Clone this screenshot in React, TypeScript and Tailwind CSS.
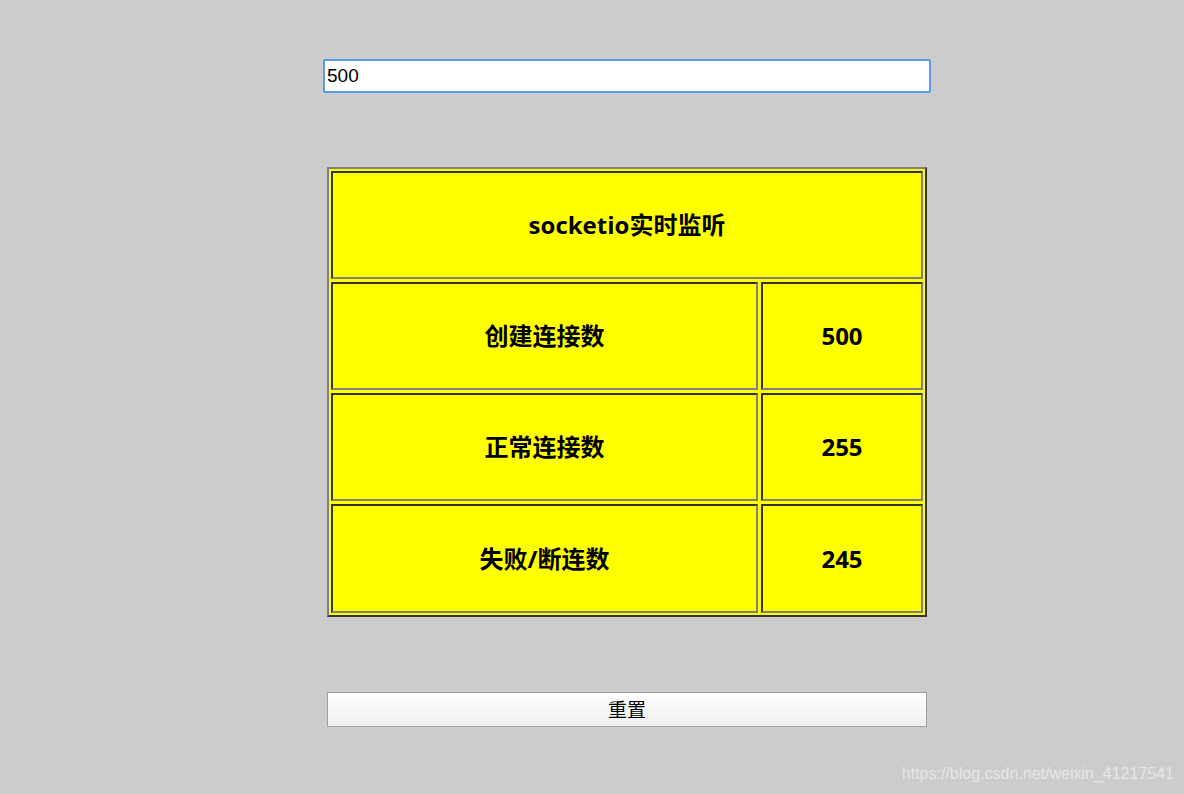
import { useState } from 'react'

const cellCls =
  'flex items-center justify-center bg-[#ffff00] border-2 border-t-[#333333] border-l-[#333333] border-r-[#808080] border-b-[#808080] text-[24px] font-bold text-black'

export default function App() {
  const [count, setCount] = useState('500')

  const rows = [
    { label: '创建连接数', value: '500', h: 'h-[108px]' },
    { label: '正常连接数', value: '255', h: 'h-[108px]' },
    { label: '失败/断连数', value: '245', h: 'h-[109px]' },
  ]

  return (
    <div
      className="relative w-[1184px] h-[794px] bg-[#cccccc] overflow-hidden"
      style={{ fontFamily: '"Open Sans", "Noto Sans CJK SC", sans-serif' }}
    >
      <div className="flex flex-col items-start pl-[323px] pt-[59px]">
        <input
          value={count}
          onChange={(e) => setCount(e.target.value)}
          className="w-[608px] h-[34px] px-[2px] bg-white border-2 border-[#5a9ae6] rounded-[2px] text-[19px] text-black outline-none"
          style={{ fontFamily: '"Liberation Sans", Arial, sans-serif' }}
        />

        <div className="ml-[4px] mt-[74px] w-[600px] p-[2px] bg-[#ffff00] border-2 border-t-[#808080] border-l-[#808080] border-r-[#333333] border-b-[#333333] flex flex-col gap-[3px]">
          <div className={`${cellCls} h-[108px]`}>socketio实时监听</div>
          {rows.map((r) => (
            <div key={r.label} className={`flex gap-[3px] ${r.h}`}>
              <div className={`${cellCls} w-[427px]`}>{r.label}</div>
              <div className={`${cellCls} flex-1`}>{r.value}</div>
            </div>
          ))}
        </div>

        <button
          onClick={() => setCount('')}
          className="ml-[4px] mt-[75px] w-[600px] h-[35px] border border-[#a0a0a0] bg-gradient-to-b from-white to-[#efefef] text-[19px] text-black"
          style={{ fontFamily: '"Noto Sans CJK SC", sans-serif' }}
        >
          重置
        </button>
      </div>

      <div
        className="absolute right-[10px] bottom-[8px] text-[16px] text-[#e6e6e6]"
        style={{ fontFamily: '"Liberation Sans", Arial, sans-serif' }}
      >
        https://blog.csdn.net/weixin_41217541
      </div>
    </div>
  )
}
